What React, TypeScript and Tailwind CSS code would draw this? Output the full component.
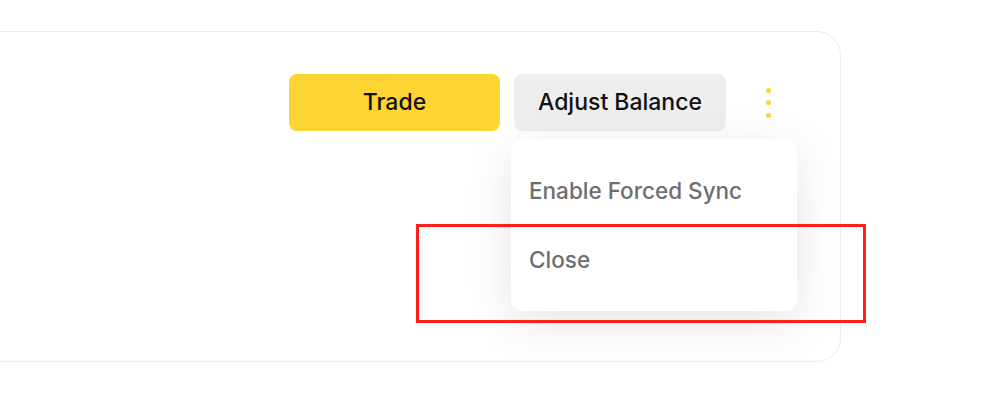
import { useState } from "react";

const menuItems = ["Enable Forced Sync", "Close"];

function KebabButton({ onClick }: { onClick: () => void }) {
  return (
    <button
      type="button"
      onClick={onClick}
      className="flex h-[57px] w-6 flex-col items-center justify-center gap-[7.5px]"
    >
      <span className="h-[5px] w-[5px] rounded-full bg-[#fcd535]" />
      <span className="h-[5px] w-[5px] rounded-full bg-[#fcd535]" />
      <span className="h-[5px] w-[5px] rounded-full bg-[#fcd535]" />
    </button>
  );
}

export default function App() {
  const [open, setOpen] = useState(true);

  return (
    <div className="relative h-[400px] w-[984px] overflow-hidden bg-white font-['Inter','Liberation_Sans',sans-serif]">
      <div className="pt-[31px]">
        {/* Account card */}
        <div className="-ml-6 h-[331px] w-[865px] rounded-3xl border border-[#ececec] bg-white">
          <div className="flex justify-end gap-[14px] pr-[60px] pt-[42px]">
            <button
              type="button"
              className="h-[57px] w-[211px] rounded-lg bg-[#fdd533] text-[23px] font-medium text-[#111]"
            >
              Trade
            </button>
            <div className="relative flex gap-[30px]">
              <button
                type="button"
                className="h-[57px] w-[212px] rounded-lg bg-[#eeeeee] text-[23px] font-medium text-[#111]"
              >
                Adjust Balance
              </button>
              <KebabButton onClick={() => setOpen((v) => !v)} />

              {open && (
                <div className="absolute left-[-3px] top-[65px] z-10 w-[286px] rounded-xl bg-white py-[17px] shadow-[0_12px_48px_rgba(0,0,0,0.11)]">
                  {menuItems.map((item) => (
                    <button
                      key={item}
                      type="button"
                      className="flex h-[69px] w-full items-center px-[18px] text-left text-[22.5px] font-medium text-[#6e6e6e]"
                    >
                      {item}
                    </button>
                  ))}
                </div>
              )}
            </div>
          </div>
        </div>
      </div>

      {/* highlight frame */}
      <div className="pointer-events-none absolute left-[416px] top-[224px] z-20 h-[99px] w-[450px] border-[3px] border-[#fe1f1f]" />
    </div>
  );
}
